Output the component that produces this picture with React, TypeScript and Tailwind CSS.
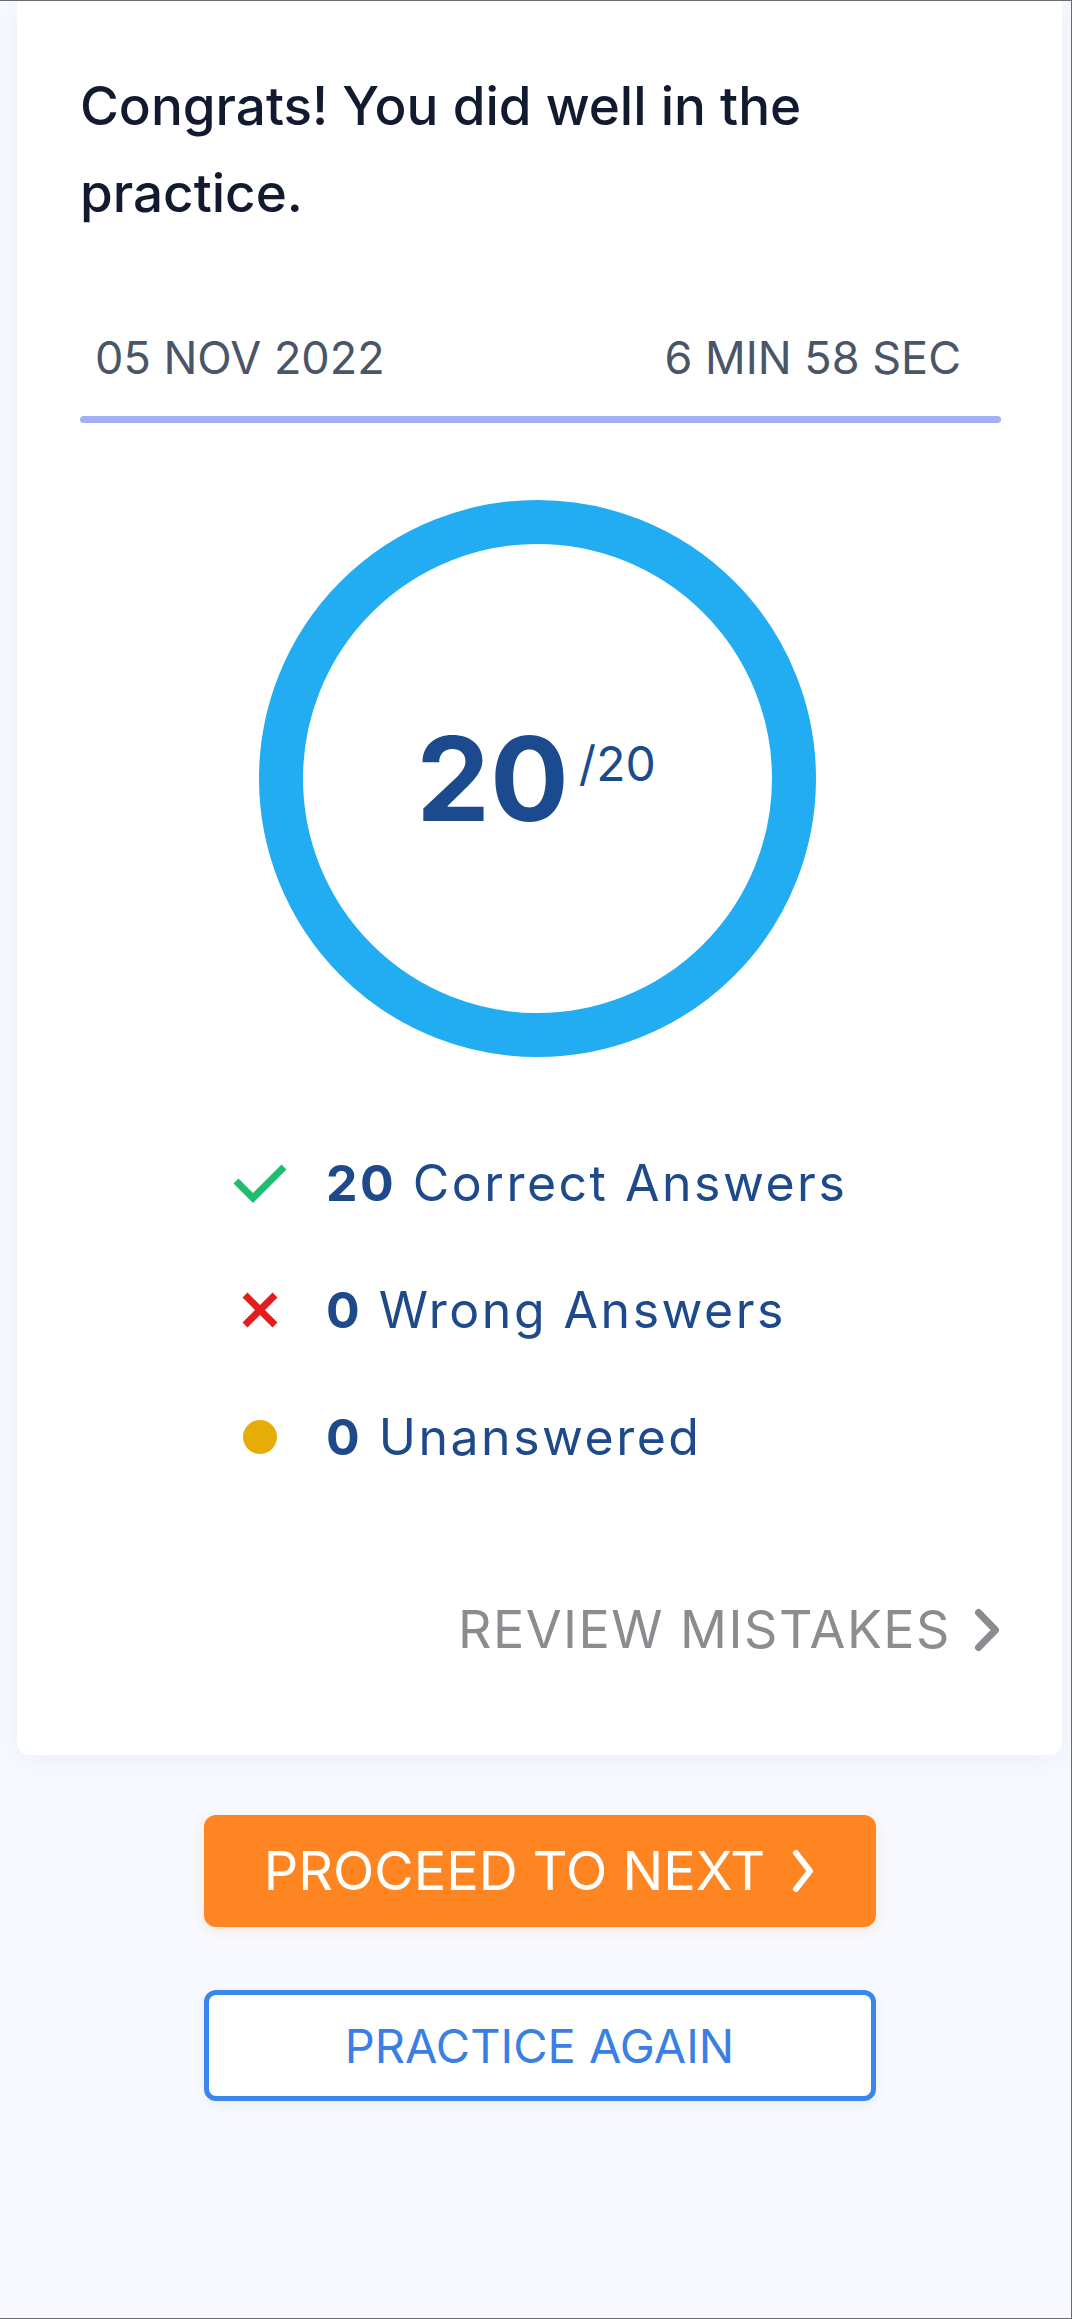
import React from "react";

function Chevron({ color, w, h, sw }: { color: string; w: number; h: number; sw: number }) {
  return (
    <svg width={w} height={h} viewBox={`0 0 ${w} ${h}`} fill="none">
      <polyline
        points={`${sw / 2 + 2},${sw / 2 + 1} ${w - sw / 2 - 2},${h / 2} ${sw / 2 + 2},${h - sw / 2 - 1}`}
        stroke={color}
        strokeWidth={sw}
        strokeLinecap="round"
        strokeLinejoin="round"
      />
    </svg>
  );
}

function StatRow({ icon, num, label }: { icon: React.ReactNode; num: string; label: string }) {
  return (
    <div className="flex items-center h-[80px]">
      <div className="w-[56px] flex items-center justify-center">{icon}</div>
      <div className="ml-[38px] text-[50px] leading-[80px] tracking-[2.5px] text-[#1e4a8c] whitespace-nowrap">
        <span className="font-bold">{num}</span> {label}
      </div>
    </div>
  );
}

export default function App() {
  return (
    <div
      className="w-[1072px] h-[2319px] bg-[#f7f9fe] border-t border-r border-b border-[#6a6a6a] overflow-hidden"
      style={{ fontFamily: "Inter, 'Noto Sans', sans-serif" }}
    >
      <div className="ml-[17px] mr-[9px] bg-white rounded-b-[12px] shadow-[0_4px_24px_rgba(60,100,200,0.07)] pt-[62px] pl-[63px] pr-[61px] pb-[95px]">
        <h1 className="text-[53px] leading-[87px] font-medium text-[#111a2e] max-w-[820px]">
          Congrats! You did well in the practice.
        </h1>

        <div className="mt-[94px] flex justify-between pl-[15px] pr-[40px] text-[45px] leading-[54px] text-[#4a5568]">
          <span>05 NOV 2022</span>
          <span>6 MIN 58 SEC</span>
        </div>
        <div className="mt-[31px] h-[7px] rounded-full bg-[#a4b0f6]" />

        <div className="mt-[77px] ml-[179px] w-[557px] h-[557px] rounded-full border-[44px] border-[#22acf2] flex items-center justify-center">
          <div className="flex items-start text-[#1b4a8e] -ml-[3px]">
            <span className="text-[117px] leading-[117px] font-bold">20</span>
            <span className="text-[48px] leading-[48px] mt-[20px] ml-[10px]">/20</span>
          </div>
        </div>

        <div className="mt-[86px] ml-[152px] w-fit flex flex-col gap-[47px]">
          <StatRow
            icon={
              <svg width="56" height="42" viewBox="0 0 56 42" fill="none">
                <polyline
                  points="4,19 21,36 52,5"
                  stroke="#1fbd70"
                  strokeWidth="7"
                  strokeLinecap="butt"
                  strokeLinejoin="miter"
                />
              </svg>
            }
            num="20"
            label="Correct Answers"
          />
          <StatRow
            icon={
              <svg width="38" height="38" viewBox="0 0 38 38" fill="none">
                <path d="M4 4 L34 34 M34 4 L4 34" stroke="#e21d1b" strokeWidth="7" strokeLinecap="butt" />
              </svg>
            }
            num="0"
            label="Wrong Answers"
          />
          <StatRow
            icon={<div className="w-[34px] h-[34px] rounded-full bg-[#e6ad08]" />}
            num="0"
            label="Unanswered"
          />
        </div>

        <div className="mt-[123px] h-[60px] flex items-center justify-end gap-[22px] text-[#8a8c90]">
          <span className="text-[52px] leading-[60px] tracking-[1.5px]">REVIEW MISTAKES</span>
          <Chevron color="#8a8c90" w={28} h={44} sw={7} />
        </div>
      </div>

      <div className="ml-[17px] mr-[9px] flex flex-col items-center">
        <button className="mt-[60px] w-[672px] h-[112px] rounded-[12px] bg-[#ff8522] shadow-[0_4px_12px_rgba(255,133,34,0.15)] flex items-center justify-center gap-[26px] text-white">
          <span className="text-[54px] leading-[60px]">PROCEED TO NEXT</span>
          <Chevron color="#ffffff" w={24} h={44} sw={6} />
        </button>
        <button className="mt-[63px] w-[672px] h-[111px] rounded-[12px] bg-white border-[5px] border-[#3a86ec] shadow-[0_4px_12px_rgba(30,60,120,0.06)] flex items-center justify-center text-[#3a80e4]">
          <span className="text-[47px] leading-[54px]">PRACTICE AGAIN</span>
        </button>
      </div>
    </div>
  );
}
